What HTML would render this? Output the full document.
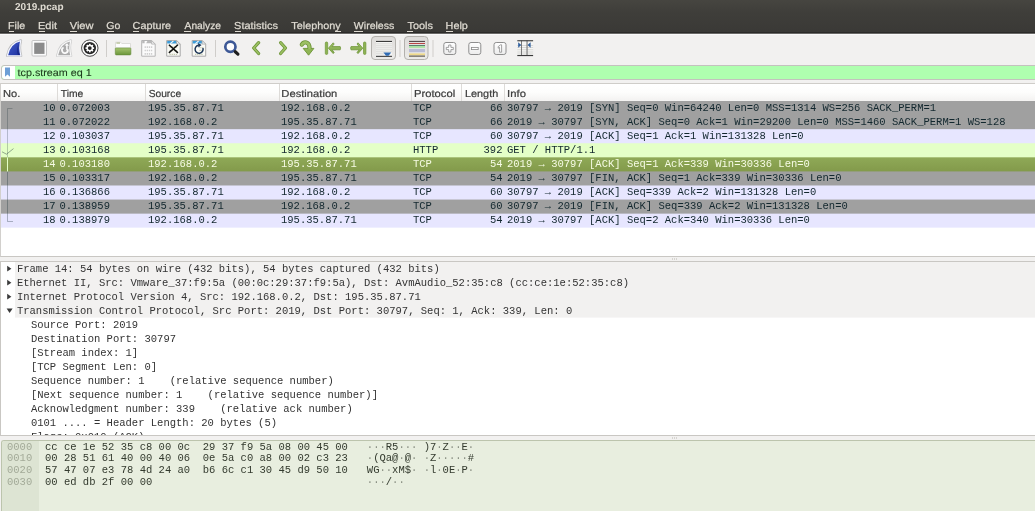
<!DOCTYPE html>
<html><head><meta charset="utf-8"><title>2019.pcap</title>
<style>
*{box-sizing:border-box;margin:0;padding:0}
html,body{width:1035px;height:511px;overflow:hidden;background:#f2f1f0}
body{position:relative;font-family:"Liberation Sans",sans-serif;color:#3c3c3c}
.abs{position:absolute}
#wrap{position:absolute;left:0;top:0;width:1035px;height:511px;will-change:transform}
#top{left:0;top:0;width:1035px;height:33px;background:linear-gradient(#464540 0%,#3f3e3a 40%,#3a3936 100%);border-bottom:1px solid #2c2b29}
#topl{left:0;top:33px;width:1035px;height:1px;background:#6a6967}
#title{transform:rotate(0.03deg);top:0px;font-size:10px;font-weight:bold;color:#dfdbd2;line-height:14px;white-space:nowrap}
.menu{-webkit-text-stroke:0.25px #dfdbd2;top:19px;font-size:10.1px;transform-origin:0 50%;color:#dfdbd2;line-height:14px;white-space:nowrap}
.ul{top:31px;height:1px;background:#dfdbd2}
#toolbar{left:0;top:34px;width:1035px;height:30px;background:#f2f1f0;border-top:1px solid #fafafa}
#filter{overflow:hidden;left:1px;top:65px;width:1040px;height:15px;background:#afffaf;border:1px solid #c4c2be;border-radius:3px}
#filter .bm{left:0;top:0;width:13px;height:13px;background:#fff;border-radius:2px 0 0 2px}
#filtertext{-webkit-text-stroke:0.1px #1d3a1d;top:66px;font-size:10.1px;transform-origin:0 50%;line-height:14px;color:#1d3a1d;white-space:nowrap}
#plist{left:0;top:83px;width:1035px;height:174px;background:#fff;border-left:1px solid #d2d0cd;border-bottom:1px solid #c9c7c3}
#phead{left:1px;top:83px;width:1034px;height:18px;background:linear-gradient(#ffffff 0%,#fdfdfc 50%,#f3f2f1 100%);border-top:1px solid #cfcdc9}
.h{-webkit-text-stroke:0.22px #3c3c3c;top:87px;font-size:10.1px;transform-origin:0 50%;line-height:14px;color:#3c3c3c;white-space:nowrap}
.hd{top:84px;width:1px;height:17px;background:#dddbd8}
.row{left:1px;width:1034px;height:14px;font-family:"Liberation Mono",monospace;font-size:10.53px;line-height:14px;color:#12272e;white-space:pre}
.row span{position:absolute;top:0;white-space:pre}
.c1{left:0;width:54.5px;text-align:right}
.c2{left:58.5px}.c3{left:147px}.c4{left:280px}.c5{left:412px}.c6{left:461px;width:40.5px;text-align:right}.c7{left:506px}
.sel{color:#f6fbe4}
.rb{left:1px;top:0;width:1034px;height:14.7px}
#details{left:0;top:261px;width:1035px;height:175px;background:#fff;overflow:hidden;border-top:1px solid #c9c7c3;border-bottom:1px solid #c9c7c3;border-left:1px solid #c9c7c3}
.d{left:0;width:1035px;height:14px;font-family:"Liberation Mono",monospace;font-size:10.53px;line-height:14px;color:#333;white-space:pre}
.d span{position:absolute;top:0}
#bytes{left:1px;top:440px;width:1034px;height:80px;background:#e8eedf;border-top:1px solid #bcc4ad;border-left:1px solid #bcc4ad;border-radius:3px 0 0 0;overflow:hidden}
#gutter{left:0;top:0;width:37px;height:80px;background:#dde4d3}
.b{font-family:"Liberation Mono",monospace;font-size:10.53px;line-height:12px;white-space:pre;color:#333a2e}
.off{color:#a3aa98}
.b s{text-decoration:none;color:#8b9184}
</style></head><body><div id="wrap">
<div id="top" class="abs"></div><div id="topl" class="abs"></div>
<div id="title" class="abs" style="left:15.2px;letter-spacing:0.016px">2019.pcap</div>
<div class="abs menu" style="left:0;transform:translateX(8.11px) scaleX(1.0541) rotate(0.03deg)">File</div>
<div class="abs menu" style="left:0;transform:translateX(38.03px) scaleX(1.0893) rotate(0.03deg)">Edit</div>
<div class="abs menu" style="left:0;transform:translateX(69.67px) scaleX(1.1018) rotate(0.03deg)">View</div>
<div class="abs menu" style="left:0;transform:translateX(106.37px) scaleX(1.0449) rotate(0.03deg)">Go</div>
<div class="abs menu" style="left:0;transform:translateX(132.59px) scaleX(1.0725) rotate(0.03deg)">Capture</div>
<div class="abs menu" style="left:0;transform:translateX(184.54px) scaleX(1.0164) rotate(0.03deg)">Analyze</div>
<div class="abs menu" style="left:0;transform:translateX(234.10px) scaleX(1.0837) rotate(0.03deg)">Statistics</div>
<div class="abs menu" style="left:0;transform:translateX(291.36px) scaleX(1.0732) rotate(0.03deg)">Telephony</div>
<div class="abs menu" style="left:0;transform:translateX(353.83px) scaleX(1.0461) rotate(0.03deg)">Wireless</div>
<div class="abs menu" style="left:0;transform:translateX(407.52px) scaleX(1.0796) rotate(0.03deg)">Tools</div>
<div class="abs menu" style="left:0;transform:translateX(445.59px) scaleX(1.0707) rotate(0.03deg)">Help</div>
<div class="abs ul" style="left:8.6px;width:5.0px"></div>
<div class="abs ul" style="left:38.5px;width:6.0px"></div>
<div class="abs ul" style="left:70.0px;width:6.5px"></div>
<div class="abs ul" style="left:106.9px;width:7.0px"></div>
<div class="abs ul" style="left:132.9px;width:6.5px"></div>
<div class="abs ul" style="left:184.3px;width:7.0px"></div>
<div class="abs ul" style="left:234.6px;width:6.0px"></div>
<div class="abs ul" style="left:334.8px;width:6.0px"></div>
<div class="abs ul" style="left:353.6px;width:9.5px"></div>
<div class="abs ul" style="left:407.4px;width:6.0px"></div>
<div class="abs ul" style="left:446.1px;width:7.0px"></div>
<div id="toolbar" class="abs"></div>
<svg class="abs" style="left:0;top:34px" width="1035" height="30" viewBox="0 34 1035 30">
<defs>
<linearGradient id="gfin" x1="0" y1="0" x2="1" y2="1"><stop offset="0" stop-color="#4560d0"/><stop offset="1" stop-color="#1b2f9c"/></linearGradient>
<linearGradient id="gfold" x1="0" y1="0" x2="0" y2="1"><stop offset="0" stop-color="#a6c570"/><stop offset="1" stop-color="#6a963a"/></linearGradient>
<linearGradient id="ggrn" x1="0" y1="0" x2="0" y2="1"><stop offset="0" stop-color="#a3c46c"/><stop offset="1" stop-color="#7aa342"/></linearGradient>
<linearGradient id="gbtn" x1="0" y1="0" x2="0" y2="1"><stop offset="0" stop-color="#dedcda"/><stop offset="1" stop-color="#ecebe9"/></linearGradient>
<linearGradient id="gz" x1="0" y1="0" x2="0" y2="1"><stop offset="0" stop-color="#ffffff"/><stop offset="1" stop-color="#ececec"/></linearGradient>
</defs>
<!-- start capture: shark fin -->
<path d="M7.3 55.8C8.6 48.5 13.2 42.3 20.8 40.6C19.4 45.6 19.6 51 21 55.8Z" fill="none" stroke="#b9b9b9" stroke-width="2.6" stroke-linejoin="round"/>
<path d="M7.3 55.8C8.6 48.5 13.2 42.3 20.8 40.6C19.4 45.6 19.6 51 21 55.8Z" fill="url(#gfin)" stroke="#f4f6ff" stroke-width="1.2" stroke-linejoin="round"/>
<path d="M18.6 43.5C17.8 47.5 18 51.5 19.2 54.8L17.8 54.8C17 51 17.3 47 18.6 43.5Z" fill="#16257e"/>
<!-- stop -->
<rect x="32" y="40.5" width="14.5" height="15.5" rx="1" fill="#fbfbfb" stroke="#c4c4c4" stroke-width="1"/>
<rect x="34.2" y="42.7" width="10.3" height="11.2" fill="#8b8b8b"/>
<!-- restart (disabled) -->
<path d="M57.3 55.8C58.6 48.5 63.2 42.3 70.8 40.6C69.4 45.6 69.6 51 71 55.8Z" fill="none" stroke="#cdcdcd" stroke-width="2.6" stroke-linejoin="round"/>
<path d="M57.3 55.8C58.6 48.5 63.2 42.3 70.8 40.6C69.4 45.6 69.6 51 71 55.8Z" fill="#ababab" stroke="#f8f8f8" stroke-width="1.2" stroke-linejoin="round"/>
<path d="M67.6 49.2A2.9 2.9 0 1 1 63.6 47.6" fill="none" stroke="#fbfbfb" stroke-width="1.7"/>
<path d="M66.9 44.6V50.2" stroke="#fbfbfb" stroke-width="1.5" fill="none"/>
<path d="M64.6 45.6L67 43.2L69 45.8Z" fill="#fbfbfb"/>
<!-- options gear -->
<circle cx="89.8" cy="48.1" r="8.2" fill="#fdfdfd" stroke="#333" stroke-width="0.9"/>
<circle cx="89.8" cy="48.1" r="6.2" fill="#262626"/>
<g fill="#fdfdfd"><circle cx="89.8" cy="48.1" r="3.3"/>
<g transform="translate(89.8 48.1)"><rect x="-0.85" y="-4.3" width="1.7" height="8.6"/><rect x="-0.85" y="-4.3" width="1.7" height="8.6" transform="rotate(45)"/><rect x="-0.85" y="-4.3" width="1.7" height="8.6" transform="rotate(90)"/><rect x="-0.85" y="-4.3" width="1.7" height="8.6" transform="rotate(135)"/></g></g>
<circle cx="89.8" cy="48.1" r="1.9" fill="#262626"/>
<!-- separators -->
<g fill="#cfcdca"><rect x="106" y="40" width="1" height="17"/><rect x="215" y="40" width="1" height="17"/><rect x="399.5" y="40" width="1" height="17"/><rect x="432.5" y="40" width="1" height="17"/></g>
<!-- open folder -->
<path d="M115.5 42.2H120.5L121.8 43.5H130.5V48.4H115.5Z" fill="#fdfdfd" stroke="#d6d6d2" stroke-width="0.8"/>
<rect x="116.4" y="42.6" width="3.6" height="0.9" fill="#9aa86c"/>
<rect x="115.3" y="47.9" width="15.6" height="7" rx="0.8" fill="url(#gfold)" stroke="#64893a" stroke-width="0.6"/>
<!-- save (disabled) -->
<path d="M141.7 40.5H151.6L155.2 44.1V56.2H141.7Z" fill="#fbfbfb" stroke="#b4b4b4" stroke-width="1"/>
<path d="M142.2 41H144.6V43.2H142.2ZM147.4 41H151.4L152.6 42.2V43.2H146.2Z" fill="#b9b9b9"/>
<path d="M151.6 40.5V44.1H155.2Z" fill="#ececec" stroke="#b4b4b4" stroke-width="0.8"/>
<g stroke="#cfcfcf" stroke-width="1.7" stroke-dasharray="1.3 0.8" fill="none"><path d="M144.6 47.1H152.6M144.6 50.5H152.6M144.6 53.9H152.6"/></g>
<!-- close file -->
<path d="M166.7 40.5H176.6L180.2 44.1V56.2H166.7Z" fill="#fbfbf6" stroke="#a9a9a9" stroke-width="1"/>
<path d="M167.2 41H176.4L178.6 43.2V43.6H167.2Z" fill="#3c9bd8"/>
<path d="M170.2 43.6L173.4 41" stroke="#f4f8fb" stroke-width="1.1"/>
<path d="M176.6 40.5V44.1H180.2Z" fill="#eef4f8" stroke="#a9a9a9" stroke-width="0.8"/>
<g stroke="#c3c9b0" stroke-width="1.3" stroke-dasharray="1.3 0.8" fill="none"><path d="M169.5 54.3H177.5M169.5 47H177.5M169.5 50.6H177.5"/></g>
<path d="M168.9 44.7L177.9 52.9M177.9 44.7L168.9 52.9" stroke="#111" stroke-width="1.5" fill="none"/>
<!-- reload file -->
<path d="M192.2 40.5H202.1L205.7 44.1V56.2H192.2Z" fill="#fbfbf6" stroke="#a9a9a9" stroke-width="1"/>
<path d="M192.7 41H201.9L204.1 43.2V43.6H192.7Z" fill="#3c9bd8"/>
<path d="M195.4 43.6L198.6 41" stroke="#f4f8fb" stroke-width="1.1"/>
<path d="M202.1 40.5V44.1H205.7Z" fill="#eef4f8" stroke="#a9a9a9" stroke-width="0.8"/>
<g stroke="#c3c9b0" stroke-width="1.3" stroke-dasharray="1.3 0.8" fill="none"><path d="M195 54.3H203M199.4 47.6H203M199.4 50.4H203"/></g>
<path d="M202.9 48A4 4 0 1 1 198.6 45.3" stroke="#1c3557" stroke-width="1.5" fill="none"/>
<path d="M198 42.9L201.6 45L198.4 47.4Z" fill="#1c3557"/>
<!-- find -->
<circle cx="230.4" cy="46.8" r="5.1" fill="#fdfdfd" stroke="#3d5896" stroke-width="2.7"/>
<path d="M235.3 51.7L237.9 54.1" stroke="#1e1e1e" stroke-width="3.2" stroke-linecap="round"/>
<!-- prev / next chevrons -->
<path d="M258.6 42.7L253.7 48L258.6 53.5" fill="none" stroke="#6c9337" stroke-width="3.2" stroke-linecap="round" stroke-linejoin="round"/>
<path d="M258.6 42.7L253.7 48L258.6 53.5" fill="none" stroke="#9bc062" stroke-width="1.7" stroke-linecap="round" stroke-linejoin="round"/>
<path d="M280.6 42.7L285.5 48L280.6 53.5" fill="none" stroke="#6c9337" stroke-width="3.2" stroke-linecap="round" stroke-linejoin="round"/>
<path d="M280.6 42.7L285.5 48L280.6 53.5" fill="none" stroke="#9bc062" stroke-width="1.7" stroke-linecap="round" stroke-linejoin="round"/>
<!-- go to packet -->
<path d="M301.8 44.6C303.6 41.6 309.6 40.6 309.6 49" fill="none" stroke="#6c9337" stroke-width="4.2" stroke-linecap="round"/>
<path d="M303.2 48.4H313.9L308.6 55.2Z" fill="#8db353" stroke="#6c9337" stroke-width="0.9" stroke-linejoin="round"/>
<path d="M301.8 44.6C303.6 41.6 309.6 40.6 309.6 49.4" fill="none" stroke="#9cc063" stroke-width="2.6" stroke-linecap="round"/>
<path d="M304.6 49H312.6L308.6 54Z" fill="#8fb555"/>
<!-- first packet -->
<rect x="325.3" y="42" width="2.4" height="12.4" rx="1" fill="#8db353" stroke="#6f9639" stroke-width="0.7"/>
<path d="M328.4 48.2L333.2 42.8L334.2 44L332 46.6H340.2Q341 48.2 340.2 49.8H332L334.2 52.4L333.2 53.6Z" fill="url(#ggrn)" stroke="#6f9639" stroke-width="0.8" stroke-linejoin="round"/>
<!-- last packet -->
<rect x="363.5" y="42" width="2.4" height="12.4" rx="1" fill="#8db353" stroke="#6f9639" stroke-width="0.7"/>
<path d="M362.8 48.2L358 42.8L357 44L359.2 46.6H351Q350.2 48.2 351 49.8H359.2L357 52.4L358 53.6Z" fill="url(#ggrn)" stroke="#6f9639" stroke-width="0.8" stroke-linejoin="round"/>
<!-- autoscroll toggle (checked) -->
<rect x="371.5" y="36.5" width="24" height="23" rx="3.5" fill="url(#gbtn)" stroke="#b3b1ad" stroke-width="1"/>
<rect x="376" y="41" width="16" height="15.6" fill="#f6f6f5"/>
<rect x="376" y="40.9" width="16" height="1.1" fill="#3a3a3a"/>
<g fill="#d3d3d1"><rect x="376" y="43.4" width="16" height="0.9"/><rect x="376" y="45.4" width="16" height="0.9"/><rect x="376" y="47.4" width="16" height="0.9"/><rect x="376" y="49.4" width="16" height="0.9"/><rect x="376" y="51.4" width="16" height="0.9"/><rect x="376" y="53.4" width="8" height="0.9"/></g>
<rect x="376" y="55.8" width="16" height="1.1" fill="#3a3a3a"/>
<path d="M383.4 52.4H391.2L388.6 55.8H386Z" fill="#2f6bb3"/>
<!-- colorize toggle (checked) -->
<rect x="404.5" y="36.5" width="23.5" height="23" rx="3.5" fill="url(#gbtn)" stroke="#b3b1ad" stroke-width="1"/>
<rect x="409" y="40.9" width="16" height="1" fill="#4b3b3b"/>
<rect x="409" y="43" width="16" height="1" fill="#b94646"/>
<rect x="409" y="45" width="16" height="1" fill="#5b7f70"/>
<rect x="409" y="46" width="16" height="1.9" fill="#a9e3a4"/>
<rect x="409" y="49" width="16" height="3.2" fill="#b9bcd6"/>
<rect x="409" y="53.4" width="16" height="1.8" fill="#efd98a"/>
<rect x="409" y="55.6" width="16" height="1" fill="#4a4333"/>
<!-- zoom in -->
<rect x="443.8" y="42.5" width="12" height="12" rx="2.2" fill="url(#gz)" stroke="#8e8e8e" stroke-width="1"/>
<path d="M448.7 45H450.9V47.4H453.3V49.6H450.9V52H448.7V49.6H446.3V47.4H448.7Z" fill="#fff" stroke="#8a8a8a" stroke-width="0.8"/>
<!-- zoom out -->
<rect x="468.8" y="42.5" width="12" height="12" rx="2.2" fill="url(#gz)" stroke="#8e8e8e" stroke-width="1"/>
<rect x="471.4" y="47.4" width="6.8" height="2.2" fill="#fff" stroke="#8a8a8a" stroke-width="0.8"/>
<!-- zoom 1:1 -->
<rect x="494" y="42.5" width="12" height="12" rx="2.2" fill="url(#gz)" stroke="#8e8e8e" stroke-width="1"/>
<path d="M498.2 46.6L500.6 44.8H501.6V52.2H499.6V47.4L498.2 48.2Z" fill="#fff" stroke="#8a8a8a" stroke-width="0.8"/>
<!-- resize columns -->
<rect x="517.3" y="40.2" width="15.8" height="15.4" fill="#f6f6f4"/>
<g fill="#cfcfcc"><rect x="517.3" y="45" width="15.8" height="0.8"/><rect x="517.3" y="47.2" width="15.8" height="0.8"/><rect x="517.3" y="49.4" width="15.8" height="0.8"/><rect x="517.3" y="51.6" width="15.8" height="0.8"/><rect x="517.3" y="53.6" width="15.8" height="0.8"/></g>
<rect x="521" y="40.5" width="0.9" height="15" fill="#6d6d6d"/><rect x="526.4" y="40.5" width="1.3" height="15" fill="#8a8a8a"/>
<rect x="517.3" y="40.2" width="15.8" height="1.1" fill="#3a3a3a"/><rect x="517.3" y="55" width="15.8" height="1.1" fill="#3a3a3a"/>
<path d="M518.2 42.3L521.2 45L518.2 47.7Z" fill="#2f5f9f"/><path d="M530.6 42.3L527.6 45L530.6 47.7Z" fill="#2f5f9f"/>
</svg>

<div id="filter" class="abs"><div class="abs bm"></div></div>
<svg class="abs" style="left:0;top:64px" width="20" height="18" viewBox="0 64 20 18"><path d="M5 67.4h5v9.4l-2.5-2.3-2.5 2.3z" fill="#6e9fd6"/></svg>
<div id="filtertext" class="abs" style="left:0;transform:translateX(17.60px) scaleX(1.064) rotate(0.03deg)">tcp.stream eq 1</div>
<div id="plist" class="abs"></div>
<div id="phead" class="abs"></div>
<div class="abs h" style="left:0;transform:translateX(3.09px) scaleX(1.0995) rotate(0.03deg)">No.</div>
<div class="abs h" style="left:0;transform:translateX(60.82px) scaleX(1.0186) rotate(0.03deg)">Time</div>
<div class="abs h" style="left:0;transform:translateX(148.65px) scaleX(1.0139) rotate(0.03deg)">Source</div>
<div class="abs h" style="left:0;transform:translateX(281.37px) scaleX(1.1079) rotate(0.03deg)">Destination</div>
<div class="abs h" style="left:0;transform:translateX(414.05px) scaleX(1.1099) rotate(0.03deg)">Protocol</div>
<div class="abs h" style="left:0;transform:translateX(465.01px) scaleX(1.075) rotate(0.03deg)">Length</div>
<div class="abs h" style="left:0;transform:translateX(507.08px) scaleX(1.1184) rotate(0.03deg)">Info</div>
<div class="abs hd" style="left:57px"></div>
<div class="abs hd" style="left:145px"></div>
<div class="abs hd" style="left:279px"></div>
<div class="abs hd" style="left:411px"></div>
<div class="abs hd" style="left:461px"></div>
<div class="abs hd" style="left:504px"></div>
<div class="abs rb" style="background:#a0a0a0;transform:translateY(101.00px)"></div>
<div class="abs rb" style="background:#a0a0a0;transform:translateY(115.08px)"></div>
<div class="abs rb" style="background:#e7e6ff;transform:translateY(129.16px)"></div>
<div class="abs rb" style="background:#e4ffc7;transform:translateY(143.24px)"></div>
<div class="abs rb" style="background:linear-gradient(#8fa957,#82994a);transform:translateY(157.32px)"></div>
<div class="abs rb" style="background:#a0a0a0;transform:translateY(171.40px)"></div>
<div class="abs rb" style="background:#e7e6ff;transform:translateY(185.48px)"></div>
<div class="abs rb" style="background:#a0a0a0;transform:translateY(199.56px)"></div>
<div class="abs rb" style="background:#e7e6ff;transform:translateY(213.64px);height:14.08px"></div>
<div class="abs row" style="top:101px"><span class="c1">10</span><span class="c2">0.072003</span><span class="c3">195.35.87.71</span><span class="c4">192.168.0.2</span><span class="c5">TCP</span><span class="c6">66</span><span class="c7">30797 → 2019 [SYN] Seq=0 Win=64240 Len=0 MSS=1314 WS=256 SACK_PERM=1</span></div>
<div class="abs row" style="top:115px"><span class="c1">11</span><span class="c2">0.072022</span><span class="c3">192.168.0.2</span><span class="c4">195.35.87.71</span><span class="c5">TCP</span><span class="c6">66</span><span class="c7">2019 → 30797 [SYN, ACK] Seq=0 Ack=1 Win=29200 Len=0 MSS=1460 SACK_PERM=1 WS=128</span></div>
<div class="abs row" style="top:129px"><span class="c1">12</span><span class="c2">0.103037</span><span class="c3">195.35.87.71</span><span class="c4">192.168.0.2</span><span class="c5">TCP</span><span class="c6">60</span><span class="c7">30797 → 2019 [ACK] Seq=1 Ack=1 Win=131328 Len=0</span></div>
<div class="abs row" style="top:143px"><span class="c1">13</span><span class="c2">0.103168</span><span class="c3">195.35.87.71</span><span class="c4">192.168.0.2</span><span class="c5">HTTP</span><span class="c6">392</span><span class="c7">GET / HTTP/1.1 </span></div>
<div class="abs row sel" style="top:157px"><span class="c1">14</span><span class="c2">0.103180</span><span class="c3">192.168.0.2</span><span class="c4">195.35.87.71</span><span class="c5">TCP</span><span class="c6">54</span><span class="c7">2019 → 30797 [ACK] Seq=1 Ack=339 Win=30336 Len=0</span></div>
<div class="abs row" style="top:171px"><span class="c1">15</span><span class="c2">0.103317</span><span class="c3">192.168.0.2</span><span class="c4">195.35.87.71</span><span class="c5">TCP</span><span class="c6">54</span><span class="c7">2019 → 30797 [FIN, ACK] Seq=1 Ack=339 Win=30336 Len=0</span></div>
<div class="abs row" style="top:185px"><span class="c1">16</span><span class="c2">0.136866</span><span class="c3">195.35.87.71</span><span class="c4">192.168.0.2</span><span class="c5">TCP</span><span class="c6">60</span><span class="c7">30797 → 2019 [ACK] Seq=339 Ack=2 Win=131328 Len=0</span></div>
<div class="abs row" style="top:199px"><span class="c1">17</span><span class="c2">0.138959</span><span class="c3">195.35.87.71</span><span class="c4">192.168.0.2</span><span class="c5">TCP</span><span class="c6">60</span><span class="c7">30797 → 2019 [FIN, ACK] Seq=339 Ack=2 Win=131328 Len=0</span></div>
<div class="abs row" style="top:213px"><span class="c1">18</span><span class="c2">0.138979</span><span class="c3">192.168.0.2</span><span class="c4">195.35.87.71</span><span class="c5">TCP</span><span class="c6">54</span><span class="c7">2019 → 30797 [ACK] Seq=2 Ack=340 Win=30336 Len=0</span></div>
<svg class="abs" style="left:0;top:101px" width="20" height="128" viewBox="0 101 20 128" fill="none" stroke-width="1">
<path d="M12.5 108.5H7.5V157.4" stroke="#12272e" stroke-opacity=".24"/>
<path d="M7.5 171.5V221.5H13" stroke="#12272e" stroke-opacity=".3"/>
<path d="M7.5 157.4V171.5" stroke="#e4ffc7"/>
<path d="M2 151.8L6.5 154.2L13.5 148.6" stroke="#12272e" stroke-opacity=".4"/>
</svg>
<div id="details" class="abs">
<div class="abs" style="left:14px;top:0;width:1021px;height:56px;background:#f2f1f0;transform:translateY(-0.4px)"></div>
<div class="abs d" style="top:0px"><svg class="abs" style="left:5px;top:3px" width="8" height="8" viewBox="0 0 8 8"><path d="M1.2 0.8L5.4 3.7L1.2 6.6z" fill="#3a3a3a"/></svg><span style="left:15.9px">Frame 14: 54 bytes on wire (432 bits), 54 bytes captured (432 bits)</span></div>
<div class="abs d" style="top:14px"><svg class="abs" style="left:5px;top:3px" width="8" height="8" viewBox="0 0 8 8"><path d="M1.2 0.8L5.4 3.7L1.2 6.6z" fill="#3a3a3a"/></svg><span style="left:15.9px">Ethernet II, Src: Vmware_37:f9:5a (00:0c:29:37:f9:5a), Dst: AvmAudio_52:35:c8 (cc:ce:1e:52:35:c8)</span></div>
<div class="abs d" style="top:28px"><svg class="abs" style="left:5px;top:3px" width="8" height="8" viewBox="0 0 8 8"><path d="M1.2 0.8L5.4 3.7L1.2 6.6z" fill="#3a3a3a"/></svg><span style="left:15.9px">Internet Protocol Version 4, Src: 192.168.0.2, Dst: 195.35.87.71</span></div>
<div class="abs d" style="top:42px"><svg class="abs" style="left:5px;top:3px" width="8" height="8" viewBox="0 0 8 8"><path d="M0.6 1.6H6.6L3.6 5.9z" fill="#3a3a3a"/></svg><span style="left:15.9px">Transmission Control Protocol, Src Port: 2019, Dst Port: 30797, Seq: 1, Ack: 339, Len: 0</span></div>
<div class="abs d" style="top:56px"><span style="left:29.9px">Source Port: 2019</span></div>
<div class="abs d" style="top:70px"><span style="left:29.9px">Destination Port: 30797</span></div>
<div class="abs d" style="top:84px"><span style="left:29.9px">[Stream index: 1]</span></div>
<div class="abs d" style="top:98px"><span style="left:29.9px">[TCP Segment Len: 0]</span></div>
<div class="abs d" style="top:112px"><span style="left:29.9px">Sequence number: 1    (relative sequence number)</span></div>
<div class="abs d" style="top:126px"><span style="left:29.9px">[Next sequence number: 1    (relative sequence number)]</span></div>
<div class="abs d" style="top:140px"><span style="left:29.9px">Acknowledgment number: 339    (relative ack number)</span></div>
<div class="abs d" style="top:154px"><span style="left:29.9px">0101 .... = Header Length: 20 bytes (5)</span></div>
<div class="abs d" style="top:168px"><span style="left:29.9px">Flags: 0x010 (ACK)</span></div>
</div>
<div class="abs" style="left:672px;top:258px;width:6px;height:2px;background:repeating-linear-gradient(90deg,#d6d4d0 0 1px,transparent 1px 2.2px)"></div>
<div class="abs" style="left:672px;top:437px;width:6px;height:2px;background:repeating-linear-gradient(90deg,#d6d4d0 0 1px,transparent 1px 2.2px)"></div>
<div id="bytes" class="abs"><div id="gutter" class="abs"></div>
<div class="abs b off" style="left:5px;top:-0.40px">0000</div>
<div class="abs b" style="left:43px;top:-0.40px">cc ce 1e 52 35 c8 00 0c  29 37 f9 5a 08 00 45 00   <s>···</s>R5<s>···</s> )7<s>·</s>Z<s>··</s>E<s>·</s></div>
<div class="abs b off" style="left:5px;top:11.34px">0010</div>
<div class="abs b" style="left:43px;top:11.34px">00 28 51 61 40 00 40 06  0e 5a c0 a8 00 02 c3 23   <s>·</s>(Qa@<s>·</s>@<s>·</s> <s>·</s>Z<s>·····</s>#</div>
<div class="abs b off" style="left:5px;top:23.08px">0020</div>
<div class="abs b" style="left:43px;top:23.08px">57 47 07 e3 78 4d 24 a0  b6 6c c1 30 45 d9 50 10   WG<s>··</s>xM$<s>·</s> <s>·</s>l<s>·</s>0E<s>·</s>P<s>·</s></div>
<div class="abs b off" style="left:5px;top:34.82px">0030</div>
<div class="abs b" style="left:43px;top:34.82px">00 ed db 2f 00 00                                  <s>···</s>/<s>··</s></div>
</div>
</div></body></html>
